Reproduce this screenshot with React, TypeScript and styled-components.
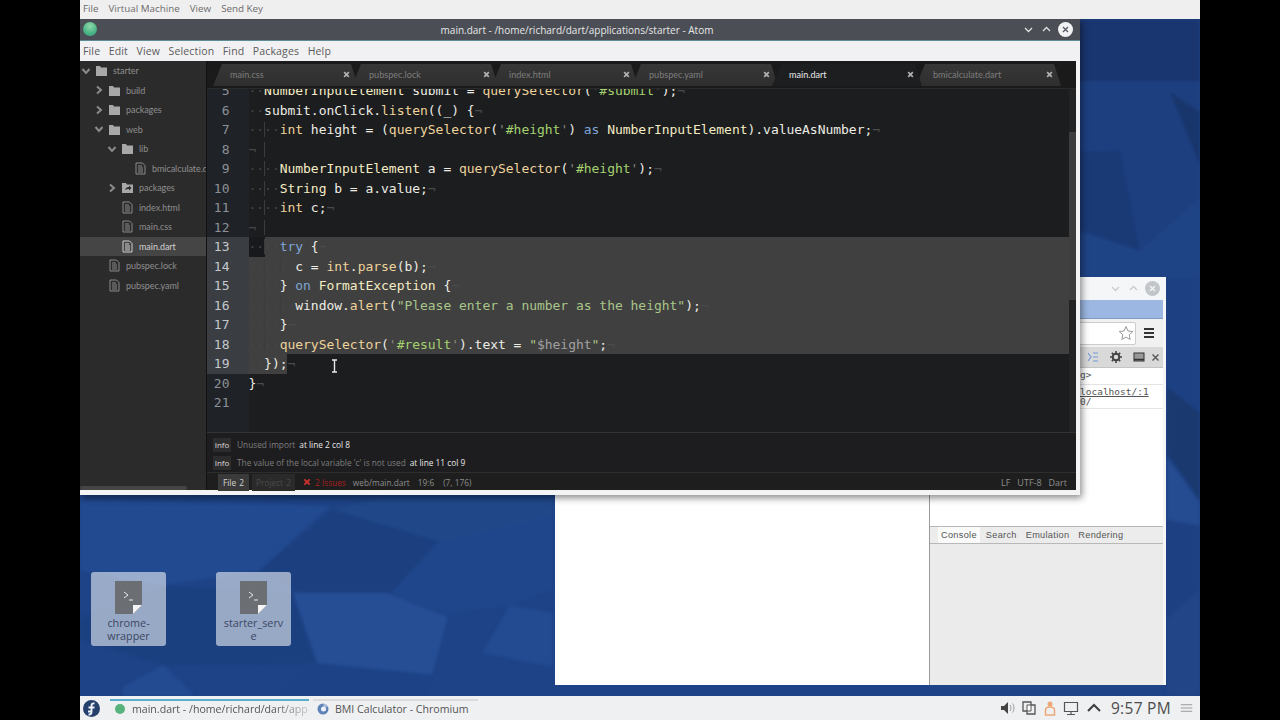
import React from "react";
import styled, {createGlobalStyle} from "styled-components";

const UI_FONT = `"Open Sans", "Noto Sans", "Liberation Sans", sans-serif`;
const NARROW_FONT = `Lato, "Open Sans", "Liberation Sans", sans-serif`;
const MONO_FONT = `"DejaVu Sans Mono", "Liberation Mono", monospace`;

const tokenColors: Record<string, string> = {
  txt: "#ecece4",
  type: "#f4ecc4",
  fn: "#eed39c",
  kw: "#7fa6d6",
  str: "#a5d26f",
  quote: "#8a8a80",
  dstr: "#a9c58a",
  interp: "#a0a0a0",
  inv: "#4a4a4a",
};

type Token = [keyof typeof tokenColors, string];

type SelKind = "none" | "full" | "inset" | "head";

type CodeLine = {
  n: number;
  lead: string[];
  tokens: Token[];
  sel?: SelKind;
};

const dots = "\u00b7\u00b7";
const eol: Token = ["inv", "\u00ac"];

const codeLines: CodeLine[] = [
  {n: 5, lead: [dots], tokens: [["type", "NumberInputElement"], ["txt", " submit = "], ["fn", "querySelector"], ["txt", "("], ["quote", "'"], ["str", "#submit"], ["quote", "'"], ["txt", ");"], eol]},
  {n: 6, lead: [dots], tokens: [["txt", "submit.onClick."], ["fn", "listen"], ["txt", "((_) {"], eol]},
  {n: 7, lead: [dots, dots], tokens: [["fn", "int"], ["txt", " height = ("], ["fn", "querySelector"], ["txt", "("], ["quote", "'"], ["str", "#height"], ["quote", "'"], ["txt", ") "], ["kw", "as"], ["txt", " "], ["type", "NumberInputElement"], ["txt", ").valueAsNumber;"], eol]},
  {n: 8, lead: ["\u00ac ", "  "], tokens: []},
  {n: 9, lead: [dots, dots], tokens: [["type", "NumberInputElement"], ["txt", " a = "], ["fn", "querySelector"], ["txt", "("], ["quote", "'"], ["str", "#height"], ["quote", "'"], ["txt", ");"], eol]},
  {n: 10, lead: [dots, dots], tokens: [["type", "String"], ["txt", " b = a.value;"], eol]},
  {n: 11, lead: [dots, dots], tokens: [["fn", "int"], ["txt", " c;"], eol]},
  {n: 12, lead: ["\u00ac ", "  "], tokens: []},
  {n: 13, lead: [dots, dots], tokens: [["kw", "try"], ["txt", " {"], eol], sel: "inset"},
  {n: 14, lead: [dots, dots, dots], tokens: [["txt", "c = "], ["fn", "int"], ["txt", "."], ["fn", "parse"], ["txt", "(b);"], eol], sel: "full"},
  {n: 15, lead: [dots, dots], tokens: [["txt", "} "], ["kw", "on"], ["txt", " "], ["type", "FormatException"], ["txt", " {"], eol], sel: "full"},
  {n: 16, lead: [dots, dots, dots], tokens: [["txt", "window."], ["fn", "alert"], ["txt", "("], ["dstr", "\"Please enter a number as the height\""], ["txt", ");"], eol], sel: "full"},
  {n: 17, lead: [dots, dots], tokens: [["txt", "}"], eol], sel: "full"},
  {n: 18, lead: [dots, dots], tokens: [["fn", "querySelector"], ["txt", "("], ["quote", "'"], ["str", "#result"], ["quote", "'"], ["txt", ").text = "], ["dstr", "\""], ["interp", "$height"], ["dstr", "\""], ["txt", ";"], eol], sel: "full"},
  {n: 19, lead: [dots], tokens: [["txt", "});"], eol], sel: "head"},
  {n: 20, lead: [], tokens: [["txt", "}"], eol]},
  {n: 21, lead: [], tokens: []},
];

type TreeEntry = {
  name: string;
  depth: number;
  kind: "dir" | "link" | "file";
  open?: boolean;
  active?: boolean;
};

const treeEntries: TreeEntry[] = [
  {name: "starter", depth: 0, kind: "dir", open: true},
  {name: "build", depth: 1, kind: "dir"},
  {name: "packages", depth: 1, kind: "dir"},
  {name: "web", depth: 1, kind: "dir", open: true},
  {name: "lib", depth: 2, kind: "dir", open: true},
  {name: "bmicalculate.d", depth: 3, kind: "file"},
  {name: "packages", depth: 2, kind: "link"},
  {name: "index.html", depth: 2, kind: "file"},
  {name: "main.css", depth: 2, kind: "file"},
  {name: "main.dart", depth: 2, kind: "file", active: true},
  {name: "pubspec.lock", depth: 1, kind: "file"},
  {name: "pubspec.yaml", depth: 1, kind: "file"},
];

const editorTabs = [
  {name: "main.css", width: 145},
  {name: "pubspec.lock", width: 146},
  {name: "index.html", width: 146},
  {name: "pubspec.yaml", width: 146},
  {name: "main.dart", width: 150, active: true},
  {name: "bmicalculate.dart", width: 145},
];

// facets of the wallpaper, in desktop coordinates
const wallpaperFacets: [string, string][] = [
  ["0,481 250,487 180,551 83,567 0,551", "#224a90"],
  ["253,491 300,479 473,479 473,497 363,523", "#204889"],
  ["180,551 253,491 358,523 310,574 220,574", "#1b3f7f"],
  ["83,567 213,574 237,644 83,646 0,620 0,600", "#1b4080"],
  ["213,574 307,574 368,598 352,656 237,644", "#264e95"],
  ["358,523 473,497 473,571 430,586 368,596 310,574", "#1f468a"],
  ["430,586 473,594 473,648 402,634", "#224b92"],
  ["43,668 83,646 113,674 113,677 43,677", "#234b92"],
  ["237,644 352,656 340,677 200,677", "#1d4386"],
  ["996,0 1120,0 1120,62 996,62", "#1a3670"],
  ["1000,62 1120,62 1120,240 1000,240", "#1d3f80"],
  ["1090,73 1120,93 1120,146", "#18366c"],
  ["1000,133 1040,131 1060,232 1000,212", "#1a3a76"],
  ["1000,212 1060,232 1120,180 1120,258 1000,258", "#1f4486"],
  ["1086,258 1120,258 1120,677 1086,677", "#1d4082"],
  ["1087,368 1120,394 1120,481 1087,434", "#19396f"],
  ["1087,438 1120,484 1120,507 1087,501", "#254b90"],
  ["1087,600 1120,570 1120,677 1087,677", "#214586"],
];

const GlobalStyle = createGlobalStyle`
  html, body {
    margin: 0;
    padding: 0;
    background: #000;
  }
  #root {
    width: 1280px;
    height: 720px;
    overflow: hidden;
  }
`;

const Screen = styled.div`
  width: 1120px;
  height: 720px;
  margin: 0 auto;
  display: flex;
  flex-direction: column;
  overflow: hidden;
  font-family: ${UI_FONT};
`;

const VmMenu = styled.div`
  height: 19px;
  flex: none;
  display: flex;
  align-items: center;
  gap: 10px;
  padding: 0 0 2px 3px;
  box-sizing: border-box;
  background: #f0eff0;
  color: #6b6b6b;
  font-size: 9.8px;
`;

const Desktop = styled.div`
  position: relative;
  flex: 1;
  background: #1e4386;
  overflow: hidden;
`;

const Wallpaper = styled.svg`
  position: absolute;
  inset: 0;
  filter: blur(1.5px);
`;

const AtomWindow = styled.div`
  position: absolute;
  left: 0;
  top: 0;
  width: 1000px;
  height: 476px;
  display: flex;
  flex-direction: column;
  background: #f4f4f4;
  box-shadow: 2px 3px 7px rgba(0, 0, 0, 0.45);
`;

const TitleBar = styled.div`
  position: relative;
  height: 22px;
  flex: none;
  display: flex;
  align-items: center;
  justify-content: center;
  padding-right: 6px;
  background: #4b4e55;
  border-bottom: 1px solid #5d8c94;
  box-sizing: border-box;
  color: #e8e8e8;
  font-size: 10px;
`;

const AtomLogo = styled.span`
  position: absolute;
  left: 3px;
  top: 3px;
  width: 14px;
  height: 14px;
  border-radius: 50%;
  background: radial-gradient(circle at 50% 30%, #8fd8a8, #3fae80 70%);
`;

const WindowButtons = styled.div`
  position: absolute;
  right: 7px;
  top: 3px;
  display: flex;
  align-items: center;
  gap: 5px;
`;

const CloseDisc = styled.span<{$muted?: boolean}>`
  width: 15px;
  height: 15px;
  border-radius: 50%;
  display: flex;
  align-items: center;
  justify-content: center;
  background: ${({$muted}) => ($muted ? "#c2c6cb" : "#f2f2f4")};
`;

const ChromeGlyph = styled.svg`
  width: 13px;
  height: 13px;
  flex: none;
`;

const MenuBar = styled.div`
  height: 20px;
  flex: none;
  display: flex;
  align-items: center;
  gap: 8.5px;
  padding-left: 3px;
  background: #f1f1f3;
  color: #5b5b5b;
  font-size: 10.5px;
  letter-spacing: 0.15px;
`;

const AtomBody = styled.div`
  flex: 1;
  min-height: 0;
  display: flex;
  margin: 0 4px 5px 0;
  background: #111;
`;

const TreePanel = styled.div`
  position: relative;
  width: 126px;
  flex: none;
  background: #2b2b2b;
  border-right: 1px solid #111;
  overflow: hidden;
`;

const TreeRow = styled.div<{$depth: number; $active?: boolean}>`
  height: 19.5px;
  display: flex;
  align-items: center;
  padding-left: ${({$depth}) => 1 + $depth * 13}px;
  background: ${({$active}) => ($active ? "#454545" : "transparent")};
  color: ${({$active}) => ($active ? "#d0d0d0" : "#8e8e8e")};
  font-family: ${NARROW_FONT};
  font-size: 9px;
  letter-spacing: -0.05px;
  white-space: nowrap;
`;

const TreeChevron = styled.svg`
  width: 10px;
  height: 10px;
  flex: none;
  margin-right: 4px;
`;

const TreeIcon = styled.svg`
  width: 13px;
  height: 13px;
  flex: none;
  margin-right: 5px;
`;

const TreeScrollThumb = styled.div`
  position: absolute;
  left: 0;
  bottom: 0;
  width: 107px;
  height: 4px;
  border-radius: 2px;
  background: #454545;
`;

const MainColumn = styled.div`
  flex: 1;
  min-width: 0;
  display: flex;
  flex-direction: column;
`;

const TabBar = styled.div`
  height: 27px;
  flex: none;
  display: flex;
  align-items: flex-end;
  padding: 0 0 2px 6px;
  box-sizing: border-box;
  background: #1a1a1a;
  overflow: hidden;
`;

const EditorTab = styled.div<{$active?: boolean}>`
  position: relative;
  z-index: ${({$active}) => ($active ? 1 : 0)};
  height: 22px;
  flex: none;
  display: flex;
  align-items: center;
  justify-content: space-between;
  box-sizing: border-box;
  margin-right: -6px;
  padding: 0 8px 1px 17px;
  clip-path: polygon(0 100%, 9px 0, calc(100% - 7px) 0, 100% 100%);
  background: ${({$active}) => ($active ? "#1d1e20" : "linear-gradient(#373737, #2e2e2e)")};
  color: ${({$active}) => ($active ? "#e8e8e8" : "#7d7d7d")};
  font-family: ${NARROW_FONT};
  font-size: 9.1px;
`;

const EditorPane = styled.div`
  flex: 1;
  min-height: 0;
  position: relative;
  display: flex;
  background: #1c1d1f;
  border-top: 1px solid #2a2a2a;
  overflow: hidden;
`;

const CodeColumn = styled.div`
  flex: 1;
  min-width: 0;
  margin-top: -8px;
  background: linear-gradient(90deg, #1f2328 42px, transparent 42px);
`;

const CodeRow = styled.div`
  height: 19.5px;
  display: flex;
  font: 13px/19.5px ${MONO_FONT};
  white-space: pre;
`;

const LineNumber = styled.div<{$selected?: boolean}>`
  width: 41.5px;
  flex: none;
  box-sizing: border-box;
  padding-right: 19px;
  text-align: right;
  color: ${({$selected}) => ($selected ? "#c4c8cc" : "#8c9096")};
  background: ${({$selected}) => ($selected ? "#3a3d42" : "transparent")};
`;

const selectionBg = "#404040";

const LineBody = styled.div<{$sel: SelKind}>`
  flex: 1;
  min-width: 0;
  letter-spacing: -0.03px;
  ${({$sel}) => $sel === "full" && `background: ${selectionBg};`}
  ${({$sel}) => $sel === "inset" && `background: linear-gradient(90deg, #17191c 15.6px, ${selectionBg} 15.6px);`}
  ${({$sel}) => $sel === "head" && `background: linear-gradient(90deg, ${selectionBg} 38px, transparent 38px);`}
`;

const Lead = styled.span<{$guide: boolean}>`
  color: #44464a;
  ${({$guide}) => $guide && "box-shadow: inset 1px 0 0 #3a3c40;"}
`;

const Tok = styled.span<{$kind: string}>`
  color: ${({$kind}) => tokenColors[$kind]};
`;

const ScrollTrack = styled.div`
  width: 7px;
  flex: none;
  background: #222325;
  padding-top: 43px;
`;

const ScrollThumb = styled.div`
  height: 168px;
  background: #3d3d3d;
`;

const IBeam = styled.svg`
  position: absolute;
  left: 124px;
  top: 270px;
  width: 7px;
  height: 14px;
`;

const LintPanel = styled.div`
  height: 40px;
  flex: none;
  box-sizing: border-box;
  padding: 3px 0 0 6px;
  display: flex;
  flex-direction: column;
  gap: 1px;
  background: #1d1d1f;
  border-top: 1px solid #333;
`;

const LintRow = styled.div`
  height: 17px;
  display: flex;
  align-items: center;
  font-size: 8.3px;
  color: #7e7e7e;
  white-space: nowrap;
`;

const LintBadge = styled.span`
  width: 18px;
  height: 14px;
  margin-right: 6px;
  display: flex;
  align-items: center;
  justify-content: center;
  background: #2c2c2c;
  color: #dcdcdc;
  font-size: 8px;
`;

const LintWhere = styled.span`
  margin-left: 4px;
  color: #e8e8e8;
`;

const StatusBar = styled.div`
  height: 18px;
  flex: none;
  display: flex;
  align-items: center;
  padding: 1px 9px 0 11px;
  background: #1e1e1e;
  border-top: 1px solid #2e2e2e;
  box-sizing: border-box;
  font-size: 8.3px;
  color: #8e8e8e;
  white-space: nowrap;
`;

const StatusTab = styled.span<{$active?: boolean; $w: number}>`
  width: ${({$w}) => $w}px;
  height: 17px;
  display: flex;
  align-items: center;
  justify-content: center;
  word-spacing: 1px;
  margin-right: 3px;
  background: ${({$active}) => ($active ? "#3a3a3a" : "#2a2a2a")};
  color: ${({$active}) => ($active ? "#d5d5d5" : "#4a4a4a")};
`;

const IssueLabel = styled.span`
  display: flex;
  align-items: center;
  gap: 4px;
  margin: 0 7px 0 5px;
  color: #a81f1f;
`;

const StatusGap = styled.span<{$w: number}>`
  margin-right: ${({$w}) => $w}px;
`;

const StatusRight = styled.div`
  margin-left: auto;
  display: flex;
  gap: 7px;
  font-size: 9px;
`;

const ChromiumWindow = styled.div`
  position: absolute;
  left: 475px;
  top: 258px;
  width: 611px;
  height: 408px;
  display: flex;
  flex-direction: column;
  background: #f5f6f8;
`;

const ChromiumHead = styled.div`
  height: 23px;
  flex: none;
  display: flex;
  align-items: center;
  justify-content: flex-end;
  gap: 5px;
  padding-right: 6px;
`;

const TabStrip = styled.div`
  height: 19px;
  flex: none;
  margin-right: 3px;
  background: #9cb8e2;
  border-bottom: 1px solid #7f9ac4;
  box-sizing: border-box;
`;

const AddressRow = styled.div`
  height: 28px;
  flex: none;
  display: flex;
  align-items: center;
  gap: 7px;
  padding-right: 8px;
  margin-right: 3px;
  background: #f1f1f1;
`;

const AddressField = styled.div`
  flex: 1;
  height: 21px;
  display: flex;
  align-items: center;
  justify-content: flex-end;
  padding-right: 1px;
  background: #fff;
  border: 1px solid #ccc;
  border-radius: 2px;
`;

const MenuGlyph = styled.svg`
  width: 12px;
  height: 12px;
`;

const StarGlyph = styled.svg`
  width: 16px;
  height: 16px;
`;

const ChromiumBody = styled.div`
  flex: 1;
  min-height: 0;
  display: flex;
  margin-right: 3px;
`;

const PageArea = styled.div`
  width: 374px;
  flex: none;
  background: #fff;
  border-right: 1px solid #9a9a9a;
`;

const DevTools = styled.div`
  flex: 1;
  min-width: 0;
  display: flex;
  flex-direction: column;
  background: #fff;
`;

const DevToolbar = styled.div`
  height: 20px;
  flex: none;
  display: flex;
  align-items: center;
  justify-content: flex-end;
  gap: 6px;
  padding-right: 3px;
  background: #d9d9d9;
  border-bottom: 1px solid #c4c4c4;
`;

const DevLines = styled.div`
  height: 158px;
  flex: none;
  padding-left: 150px;
  font: 9.5px/10px ${MONO_FONT};
  color: #555;
`;

const ElementLine = styled.div`
  height: 17px;
  padding-top: 2px;
  box-sizing: border-box;
  border-bottom: 1px solid #e4e4e4;
`;

const SourceLine = styled.div`
  height: 24px;
  padding-top: 2px;
  box-sizing: border-box;
  border-bottom: 1px solid #e4e4e4;
`;

const SourceLink = styled.span`
  text-decoration: underline;
`;

const DrawerTabs = styled.div`
  height: 18px;
  flex: none;
  display: flex;
  align-items: stretch;
  gap: 3px;
  padding-left: 8px;
  box-sizing: border-box;
  background: #ececec;
  border-top: 1px solid #b8b8b8;
  border-bottom: 1px solid #b8b8b8;
  font-family: "Liberation Sans", Arial, sans-serif;
  font-size: 9.2px;
  color: #555;
  letter-spacing: 0.3px;
`;

const DrawerTab = styled.span<{$active?: boolean}>`
  display: flex;
  align-items: center;
  padding: 0 3px;
  background: ${({$active}) => ($active ? "#fafafa" : "transparent")};
`;

const Drawer = styled.div`
  flex: 1;
  background: #ebebeb;
`;

const IconGroup = styled.div`
  position: absolute;
  left: 11px;
  top: 553px;
  display: flex;
  gap: 50px;
`;

const DesktopIcon = styled.div`
  width: 75px;
  height: 74px;
  box-sizing: border-box;
  padding-top: 9px;
  display: flex;
  flex-direction: column;
  align-items: center;
  border-radius: 3px;
  background: rgba(255, 255, 255, 0.55);
  color: #3b4763;
  font-size: 10.8px;
  line-height: 12.5px;
  text-align: center;
`;

const ScriptGlyph = styled.svg`
  width: 27px;
  height: 33px;
  flex: none;
  margin-bottom: 3px;
`;

const Taskbar = styled.div`
  height: 24px;
  flex: none;
  display: flex;
  align-items: center;
  background: #eff0f2;
  color: #555;
  font-size: 10.6px;
  white-space: nowrap;
`;

const FedoraGlyph = styled.svg`
  width: 17px;
  height: 17px;
  flex: none;
  margin: 0 10px 0 3px;
`;

const TaskButton = styled.div<{$active?: boolean; $w: number}>`
  width: ${({$w}) => $w}px;
  height: 20px;
  flex: none;
  display: flex;
  align-items: center;
  gap: 7px;
  margin-top: 2px;
  padding: 0 0 2px 4px;
  margin-right: 4px;
  box-sizing: border-box;
  border-top: 2px solid ${({$active}) => ($active ? "#5aaecb" : "#dcdcdc")};
`;

const TaskLabel = styled.span<{$fade?: boolean}>`
  ${({$fade}) => $fade && `
    -webkit-mask-image: linear-gradient(90deg, #000 80%, rgba(0, 0, 0, 0.25));
    mask-image: linear-gradient(90deg, #000 80%, rgba(0, 0, 0, 0.25));
  `}
`;

const TaskDot = styled.span`
  width: 10px;
  height: 10px;
  margin-left: 1px;
  flex: none;
  border-radius: 50%;
  background: #58b27c;
`;

const TaskIcon = styled.svg`
  width: 12px;
  height: 12px;
  flex: none;
  margin-right: -1px;
`;

const Tray = styled.div`
  margin-left: auto;
  display: flex;
  align-items: center;
  gap: 5px;
  padding-right: 7px;
`;

const TrayGlyph = styled.svg<{$w?: number; $gapLeft?: number}>`
  width: ${({$w}) => $w ?? 16}px;
  height: 16px;
  flex: none;
  margin-left: ${({$gapLeft}) => $gapLeft ?? 0}px;
`;

const Clock = styled.span`
  margin: 0 4px 0 4px;
  font-size: 15.5px;
  color: #4c4c4c;
  letter-spacing: 0.3px;
`;

const Chevron = ({open}: {open?: boolean}) => (
  <TreeChevron viewBox="0 0 10 10">
    <path d={open ? "M1.5 3 5 7 8.5 3" : "M3 1.5 7 5 3 8.5"} fill="none" stroke="#8a8a8a" strokeWidth="2"/>
  </TreeChevron>
);

const EntryIcon = ({kind, active}: {kind: TreeEntry["kind"]; active?: boolean}) => {
  if (kind === "file") {
    const c = active ? "#d0d0d0" : "#8a8a8a";
    return (
      <TreeIcon viewBox="0 0 13 13">
        <path d="M2 1h6.5L11 3.5V12H2z" fill="none" stroke={c}/>
        <path d="M4 4h4M4 6h5M4 8h5M4 10h5" stroke={c}/>
      </TreeIcon>
    );
  }
  return (
    <TreeIcon viewBox="0 0 13 13">
      <path d="M1 2h4l1 1.5h6V12H1z" fill="#a8a8a8"/>
      {kind === "link" ? <path d="M4 9c.5-2 2-3 4-3V4.5L10.5 7 8 9.500V8c-1.500 0-3 0-4 1z" fill="#2b2b2b"/> : null}
    </TreeIcon>
  );
};

const Glyph = ({d, color = "#e0e0e0"}: {d: string; color?: string}) => (
  <ChromeGlyph viewBox="0 0 13 13">
    <path d={d} fill="none" stroke={color} strokeWidth="1.300"/>
  </ChromeGlyph>
);

const CloseMark = ({color, size, weight}: {color: string; size: number; weight: number}) => (
  <MenuGlyph viewBox="0 0 12 12" style={{width: size, height: size}}>
    <path d="M2 2l8 8M10 2l-8 8" stroke={color} strokeWidth={weight}/>
  </MenuGlyph>
);

const App = () => {
  return (
    <>
      <GlobalStyle/>
      <Screen>
        <VmMenu>
          <span>File</span>
          <span>Virtual Machine</span>
          <span>View</span>
          <span>Send Key</span>
        </VmMenu>
        <Desktop>
          <Wallpaper width="1120" height="677" viewBox="0 0 1120 677">
            {wallpaperFacets.map(([points, fill]) => (
              <polygon key={points} points={points} fill={fill}/>
            ))}
          </Wallpaper>
          <ChromiumWindow>
            <ChromiumHead>
              <Glyph d="M3 5l3.500 3.500L10 5" color="#c8ccd2"/>
              <Glyph d="M3 8l3.500-3.500L10 8" color="#c8ccd2"/>
              <CloseDisc $muted>
                <Glyph d="M4 4l5 5M9 4l-5 5" color="#f4f4f4"/>
              </CloseDisc>
            </ChromiumHead>
            <TabStrip/>
            <AddressRow>
              <AddressField>
                <StarGlyph viewBox="0 0 16 16">
                  <path d="M8 1.500l2 4.500 4.800.5-3.600 3.200 1 4.800L8 12.100 3.800 14.500l1-4.800L1.200 6.500 6 6z" fill="#fff" stroke="#999"/>
                </StarGlyph>
              </AddressField>
              <MenuGlyph viewBox="0 0 12 12">
                <path d="M1 2h10M1 6h10M1 10h10" stroke="#333" strokeWidth="2"/>
              </MenuGlyph>
            </AddressRow>
            <ChromiumBody>
              <PageArea/>
              <DevTools>
                <DevToolbar>
                  <MenuGlyph viewBox="0 0 12 12">
                    <path d="M1 2l3 4-3 4M6 2h5M6 6h5M6 10h5" fill="none" stroke="#6f9ad6" strokeWidth="1.200"/>
                  </MenuGlyph>
                  <MenuGlyph viewBox="0 0 12 12" style={{marginLeft: 5}}>
                    <circle cx="6" cy="6" r="3.300" fill="none" stroke="#444" strokeWidth="2"/>
                    <path d="M6 0v2.500M6 9.500V12M0 6h2.500M9.500 6H12M1.800 1.800l1.800 1.800M8.400 8.400l1.800 1.800M1.800 10.200l1.800-1.800M8.400 3.600l1.800-1.800" stroke="#444" strokeWidth="1.600"/>
                  </MenuGlyph>
                  <MenuGlyph viewBox="0 0 12 12" style={{marginLeft: 5}}>
                    <rect x="1" y="2" width="10" height="8" fill="#999" stroke="#333"/>
                    <path d="M1 8.500h10" stroke="#333" strokeWidth="1.500"/>
                  </MenuGlyph>
                  <CloseMark color="#555" size={9} weight={1.8}/>
                </DevToolbar>
                <DevLines>
                  <ElementLine>g&gt;</ElementLine>
                  <SourceLine>
                    <SourceLink>localhost/:1</SourceLink>
                    <br/>0/
                  </SourceLine>
                </DevLines>
                <DrawerTabs>
                  <DrawerTab $active>Console</DrawerTab>
                  <DrawerTab>Search</DrawerTab>
                  <DrawerTab>Emulation</DrawerTab>
                  <DrawerTab>Rendering</DrawerTab>
                </DrawerTabs>
                <Drawer/>
              </DevTools>
            </ChromiumBody>
          </ChromiumWindow>
          <AtomWindow>
            <TitleBar>
              <AtomLogo/>
              main.dart - /home/richard/dart/applications/starter - Atom
              <WindowButtons>
                <Glyph d="M3 5l3.500 3.500L10 5"/>
                <Glyph d="M3 8l3.500-3.500L10 8"/>
                <CloseDisc>
                  <Glyph d="M4 4l5 5M9 4l-5 5" color="#555a62"/>
                </CloseDisc>
              </WindowButtons>
            </TitleBar>
            <MenuBar>
              <span>File</span>
              <span>Edit</span>
              <span>View</span>
              <span>Selection</span>
              <span>Find</span>
              <span>Packages</span>
              <span>Help</span>
            </MenuBar>
            <AtomBody>
              <TreePanel>
                {treeEntries.map((entry, key) => (
                  <TreeRow key={key} $depth={entry.depth} $active={entry.active}>
                    {entry.kind === "file" ? <TreeChevron/> : <Chevron open={entry.open}/>}
                    <EntryIcon kind={entry.kind} active={entry.active}/>
                    {entry.name}
                  </TreeRow>
                ))}
                <TreeScrollThumb/>
              </TreePanel>
              <MainColumn>
                <TabBar>
                  {editorTabs.map((tab) => (
                    <EditorTab key={tab.name} $active={tab.active} style={{width: tab.width}}>
                      <span>{tab.name}</span>
                      <CloseMark color="#b0b0b0" size={7} weight={3}/>
                    </EditorTab>
                  ))}
                </TabBar>
                <EditorPane>
                  <CodeColumn>
                    {codeLines.map((line) => (
                      <CodeRow key={line.n}>
                        <LineNumber $selected={line.sel !== undefined}>{line.n}</LineNumber>
                        <LineBody $sel={line.sel ?? "none"}>
                          {line.lead.map((lead, i) => (
                            <Lead key={i} $guide={i > 0}>{lead}</Lead>
                          ))}
                          {line.tokens.map(([kind, text], i) => (
                            <Tok key={i} $kind={kind}>{text}</Tok>
                          ))}
                        </LineBody>
                      </CodeRow>
                    ))}
                  </CodeColumn>
                  <ScrollTrack>
                    <ScrollThumb/>
                  </ScrollTrack>
                  <IBeam viewBox="0 0 7 14">
                    <path d="M1 1h5M3.500 1v12M1 13h5" fill="none" stroke="#e8e8e8" strokeWidth="1.400"/>
                  </IBeam>
                </EditorPane>
                <LintPanel>
                  <LintRow>
                    <LintBadge>Info</LintBadge>
                    Unused import
                    <LintWhere>at line 2 col 8</LintWhere>
                  </LintRow>
                  <LintRow>
                    <LintBadge>Info</LintBadge>
                    The value of the local variable 'c' is not used
                    <LintWhere>at line 11 col 9</LintWhere>
                  </LintRow>
                </LintPanel>
                <StatusBar>
                  <StatusTab $active $w={31}>File 2</StatusTab>
                  <StatusTab $w={43}>Project 2</StatusTab>
                  <IssueLabel>
                    <CloseMark color="#c8302c" size={8} weight={3}/>
                    2 Issues
                  </IssueLabel>
                  <StatusGap $w={8}>web/main.dart</StatusGap>
                  <StatusGap $w={9}>19:6</StatusGap>
                  <span>(7, 176)</span>
                  <StatusRight>
                    <span>LF</span>
                    <span>UTF-8</span>
                    <span>Dart</span>
                  </StatusRight>
                </StatusBar>
              </MainColumn>
            </AtomBody>
          </AtomWindow>
          <IconGroup>
            <DesktopIcon>
              <ScriptGlyph viewBox="0 0 27 33">
                <path d="M0 0h27v24l-9 9H0z" fill="#6b6e73"/>
                <path d="M27 24l-9 9v-9z" fill="#f4f4f4"/>
                <path d="M9 11l4 3-4 3M14 19h4" fill="none" stroke="#e8e8e8"/>
              </ScriptGlyph>
              chrome-<br/>wrapper
            </DesktopIcon>
            <DesktopIcon>
              <ScriptGlyph viewBox="0 0 27 33">
                <path d="M0 0h27v24l-9 9H0z" fill="#6b6e73"/>
                <path d="M27 24l-9 9v-9z" fill="#f4f4f4"/>
                <path d="M9 11l4 3-4 3M14 19h4" fill="none" stroke="#e8e8e8"/>
              </ScriptGlyph>
              starter_serv<br/>e
            </DesktopIcon>
          </IconGroup>
        </Desktop>
        <Taskbar>
          <FedoraGlyph viewBox="0 0 17 17">
            <circle cx="8.500" cy="8.500" r="8.500" fill="#26406e"/>
            <path d="M5 11.500h3.500M11.500 3.500C9.500 3 8.500 4 8.500 6v6c0 1.800-1 2.800-3 2.500M5.500 7.500h6" fill="none" stroke="#eef2f8" strokeWidth="1.900"/>
          </FedoraGlyph>
          <TaskButton $active $w={199}>
            <TaskDot/>
            <TaskLabel $fade>main.dart - /home/richard/dart/app</TaskLabel>
          </TaskButton>
          <TaskButton $w={165}>
            <TaskIcon viewBox="0 0 12 12">
              <circle cx="6" cy="6" r="5.500" fill="#5f83b8"/>
              <circle cx="6.500" cy="6" r="2.500" fill="#eef2f8"/>
              <path d="M6 0.500a5.500 5.500 0 0 1 5 3.500H7z" fill="#eef2f8" opacity="0.5"/>
            </TaskIcon>
            <TaskLabel>BMI Calculator - Chromium</TaskLabel>
          </TaskButton>
          <Tray>
            <TrayGlyph viewBox="0 0 16 16">
              <path d="M1 6h3l4-4v12l-4-4H1z" fill="#444"/>
              <path d="M10 5c1.300 1.800 1.300 4.200 0 6M12.500 3.500c2 2.600 2 6.400 0 9" fill="none" stroke="#999"/>
            </TrayGlyph>
            <TrayGlyph viewBox="0 0 16 16">
              <path d="M2 2h8v3h4v9H6v-3H2z" fill="none" stroke="#555" strokeWidth="1.300"/>
              <path d="M6 5h4v6H6z" fill="#fff" stroke="#555"/>
            </TrayGlyph>
            <TrayGlyph viewBox="0 0 16 16">
              <circle cx="8" cy="4" r="2.500" fill="#eea878"/>
              <path d="M3.500 15V10c0-2 2-3 4.500-3s4.500 1 4.500 3v5z" fill="none" stroke="#eea878" strokeWidth="1.500"/>
            </TrayGlyph>
            <TrayGlyph viewBox="0 0 16 16">
              <path d="M1.500 2.500h13v9h-13zM8 11.500V14M4 14.500h8" fill="none" stroke="#555" strokeWidth="1.200"/>
            </TrayGlyph>
            <TrayGlyph viewBox="0 0 16 16" $gapLeft={2}>
              <path d="M2 11l6-6 6 6" fill="none" stroke="#3e3e3e" strokeWidth="2"/>
            </TrayGlyph>
            <Clock>9:57 PM</Clock>
            <TrayGlyph viewBox="0 0 16 16" $w={13}>
              <path d="M1 4h14M1 8h14M1 12h14" stroke="#999" strokeWidth="1.400"/>
            </TrayGlyph>
          </Tray>
        </Taskbar>
      </Screen>
    </>
  );
};

export default App;
